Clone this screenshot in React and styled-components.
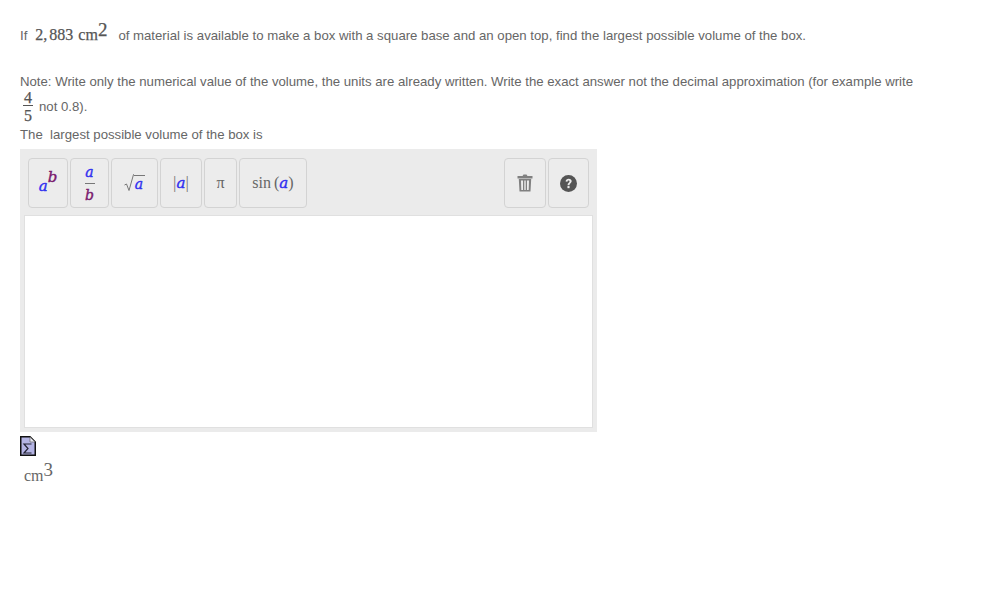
import React from "react";
import styled, { createGlobalStyle } from "styled-components";

const Global = createGlobalStyle`
  html, body { margin: 0; padding: 0; background: #fff; }
  body { font-family: "Liberation Sans", Arial, sans-serif; font-size: 13.2px; color: #666; }
`;
const Page = styled.div`
  padding: 26px 20px 0;
  width: 968px;
`;
const Line = styled.div`
  height: ${p => p.$h}px;
  margin-bottom: ${p => p.$mb || 0}px;
  display: flex;
  align-items: ${p => p.$align || "center"};
  white-space: pre;
  color: #666;
`;
const MathText = styled.span`
  font-family: "Liberation Serif", "Times New Roman", serif;
  font-size: 16px;
  color: #555;
  -webkit-text-stroke: 0.25px #555;
  margin: 0 11px 0 8px;
  display: inline-flex;
  align-items: baseline;
`;
const Comma = styled.span`
  margin-right: 2px;
`;
const Unit = styled.span`
  margin-left: 5px;
`;
const Sup = styled.span`
  font-size: 19px;
  line-height: 0;
  position: relative;
  top: -4px;
`;
const Frac = styled.span`
  display: inline-flex;
  flex-direction: column;
  align-items: center;
  font-family: "Liberation Serif", serif;
  font-size: 16px;
  line-height: 13px;
  width: 10px;
  color: #555;
  -webkit-text-stroke: 0.25px #555;
  margin: 0 6px 0 3px;
`;
const FracTop = styled.span`
  border-bottom: 1px solid #555;
  width: 100%;
  text-align: center;
  height: 14px;
  margin-bottom: 3px;
`;
const Editor = styled.div`
  width: 577px;
  height: 283px;
  background: #ebebeb;
  padding: 9px 4px 4px;
  box-sizing: border-box;
  display: flex;
  flex-direction: column;
`;
const Toolbar = styled.div`
  display: flex;
  height: 50px;
  padding: 0 4px;
  gap: 2px;
`;
const Spacer = styled.div`flex: 1;`;
const Btn = styled.div`
  width: ${p => p.$w}px;
  height: 50px;
  box-sizing: border-box;
  border: 1px solid #d3d3d3;
  border-radius: 4px;
  background: #ececec;
  padding-top: ${p => p.$pt || 0}px;
  display: flex;
  align-items: center;
  justify-content: center;
  font-family: "Liberation Serif", serif;
  font-size: 16px;
  color: #666;
`;
const V = styled.i`
  font-family: "DejaVu Serif", serif;
  font-style: italic;
  font-weight: 400;
  -webkit-text-stroke: 0.4px currentColor;
  color: ${p => p.$c || "#3030f0"};
  font-size: ${p => p.$s || 15}px;
`;
const PowSup = styled.i`
  font-family: "DejaVu Serif", serif;
  font-style: italic;
  font-weight: 400;
  -webkit-text-stroke: 0.4px currentColor;
  color: #7a1a6e;
  font-size: 15px;
  position: relative;
  top: -9px;
`;
const BtnFrac = styled.span`
  display: flex;
  flex-direction: column;
  align-items: center;
  line-height: 16px;
  width: 10px;
`;
const BtnFracTop = styled.span`
  border-bottom: 1px solid #777;
  width: 100%;
  text-align: center;
  padding-bottom: 3px;
  margin-bottom: 3px;
`;
const Area = styled.div`
  width: 569px;
  height: 215px;
  margin-top: 7px;
  background: #fff;
  border: 1px solid #e0e0e0;
  box-sizing: border-box;
`;
const Radical = styled.span`
  display: inline-flex;
  align-items: flex-end;
  height: 18px;
`;
const Over = styled.span`
  border-top: 1px solid #777;
  padding: 0 2px 0 1px;
  line-height: 15px;
`;
const Bars = styled.span`
  font-size: 17px;
  color: #777;
`;
const Paren = styled.span`
  margin-left: ${p => p.$ml || 0}px;
`;
const Icon = styled.svg`
  display: block;
`;
const Sigma = styled.svg`
  display: block;
  margin-top: 4px;
`;
const UnitRow = styled.div`
  font-family: "Liberation Serif", serif;
  font-size: 16px;
  color: #666;
  padding-left: 4px;
  height: 24px;
  margin-top: 5px;
  display: flex;
  align-items: flex-end;
`;
const UnitSup = styled.span`
  font-size: 19px;
  position: relative;
  top: -6px;
  line-height: 18px;
`;

export default function App() {
  return (
    <>
      <Global />
      <Page>
        <Line $h={18} $mb={29} $align="baseline">
          If<MathText>2<Comma>,</Comma>883<Unit>cm</Unit><Sup>2</Sup></MathText>of material is available to make a box with a square base and an open top, find the largest possible volume of the box.
        </Line>
        <Line $h={16}>
          Note: Write only the numerical value of the volume, the units are already written. Write the exact answer not the decimal approximation (for example write
        </Line>
        <Line $h={34}>
          <Frac><FracTop>4</FracTop><span>5</span></Frac>not 0.8).
        </Line>
        <Line $h={22} $mb={4}>The  largest possible volume of the box is</Line>
        <Editor>
          <Toolbar>
            <Btn $w={40} $pt={6}><V>a</V><PowSup>b</PowSup></Btn>
            <Btn $w={39}>
              <BtnFrac><BtnFracTop><V $s={14}>a</V></BtnFracTop><V $s={14} $c="#7a1a6e">b</V></BtnFrac>
            </Btn>
            <Btn $w={47}>
              <Radical>
                <svg width="10" height="18" viewBox="0 0 10 18"><path d="M0.5 11 L2.5 10 L5 16.5 L9.5 0.5 L10 0.5" fill="none" stroke="#777" strokeWidth="1"/></svg>
                <Over><V $s={14}>a</V></Over>
              </Radical>
            </Btn>
            <Btn $w={42}><Bars>|</Bars><V>a</V><Bars>|</Bars></Btn>
            <Btn $w={33}>π</Btn>
            <Btn $w={68}>sin<Paren $ml={3}>(</Paren><V>a</V><Paren>)</Paren></Btn>
            <Spacer />
            <Btn $w={42}>
              <Icon width="16" height="18" viewBox="0 0 16 18">
                <path d="M5.5 2 L6.5 0.5 H9.5 L10.5 2 H15.5 V4.5 H0.5 V2 Z" fill="#808080"/>
                <path d="M1.8 5 H14.2 L13.5 17.5 H2.5 Z M4 6.5 L4.3 16 H6 V6.5 Z M7.3 6.5 V16 H8.7 V6.5 Z M10 6.5 V16 H11.7 L12 6.5 Z" fill="#808080" fillRule="evenodd"/>
              </Icon>
            </Btn>
            <Btn $w={41}>
              <Icon width="17" height="17" viewBox="0 0 16 16">
                <circle cx="8" cy="8" r="8" fill="#555"/>
                <path d="M5.3 6.2 C5.4 4.5 6.6 3.6 8.2 3.6 C9.9 3.6 11 4.6 11 5.9 C11 7.6 8.9 7.8 8.9 9.6 H7.1 C7.1 7.3 9 7.2 9 6 C9 5.5 8.7 5.2 8.1 5.2 C7.5 5.2 7.1 5.6 7 6.4 Z" fill="#ececec"/>
                <rect x="7" y="10.4" width="2" height="2" fill="#ececec"/>
              </Icon>
            </Btn>
          </Toolbar>
          <Area />
        </Editor>
        <Sigma width="16" height="20" viewBox="0 0 16 20">
          <path d="M0.75 0.75 H10 L15.25 6 V19.25 H0.75 Z" fill="#b4b4e4" stroke="#111" strokeWidth="1.5"/>
          <path d="M10 1 V6 H15 Z" fill="#e8e8f4" stroke="#666" strokeWidth="0.7"/>
          <path d="M11.5 8 H4 L8 12.5 L4 17 H11.5" fill="none" stroke="#223" strokeWidth="1.2"/>
        </Sigma>
        <UnitRow>cm<UnitSup>3</UnitSup></UnitRow>
      </Page>
    </>
  );
}
